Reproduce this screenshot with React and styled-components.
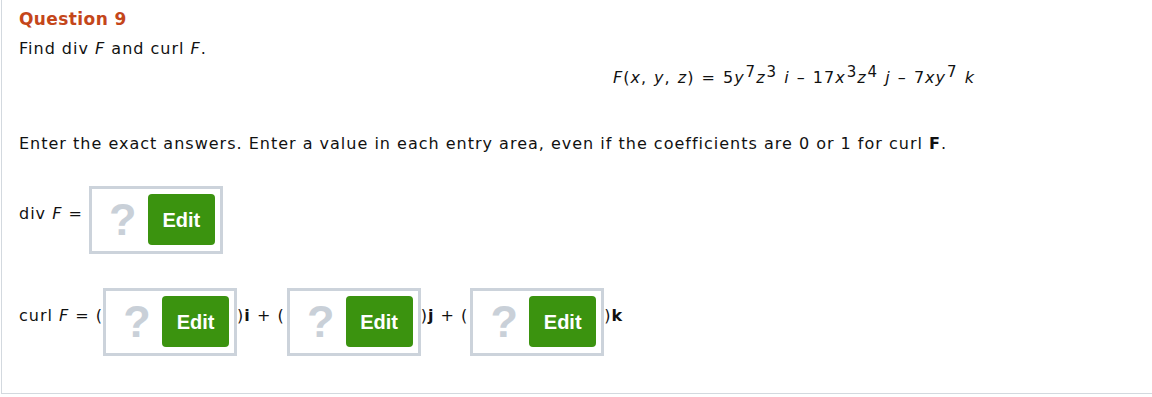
import styled, { createGlobalStyle } from 'styled-components';

const Global = createGlobalStyle`
  html, body { margin: 0; padding: 0; background: #fff; }
  body { font-family: "DejaVu Sans", Verdana, sans-serif; color: #111; }
`;

const Panel = styled.div`
  margin-left: 1px;
  height: 394px;
  border-left: 1px solid #d3d9df;
  border-bottom: 1px solid #d3d9df;
  padding: 8px 0 0 17px;
  box-sizing: border-box;
`;

const Heading = styled.div`
  font-size: 17px;
  line-height: 22px;
  font-weight: bold;
  letter-spacing: 0.4px;
  color: #c4461a;
`;

const Text = styled.div`
  font-size: 16px;
  line-height: 20px;
  letter-spacing: 1px;
  margin-top: ${({ $top }) => $top || 0}px;
`;

const Formula = styled.div`
  font-size: 16px;
  line-height: 20px;
  letter-spacing: 1px;
  word-spacing: 1px;
  margin-top: 9px;
  padding-left: 594px;
  white-space: nowrap;
  sup { font-size: 15px; line-height: 0; vertical-align: 6px; margin-left: 1px; }
`;

const Row = styled.div`
  display: flex;
  align-items: flex-start;
  margin-top: ${({ $top }) => $top}px;
  font-size: 16px;
  line-height: 20px;
  letter-spacing: 1px;
`;

const Label = styled.span`
  padding-top: 18px;
  margin-right: ${({ $gap }) => $gap || 0}px;
  white-space: pre;
`;

const Box = styled.div`
  width: 134px;
  height: 68px;
  box-sizing: border-box;
  border: 3px solid #ccd3db;
  display: flex;
  align-items: center;
  padding: 5px 5px 6px 0;
  letter-spacing: 0;
`;

const Mark = styled.span`
  flex: 1;
  text-align: center;
  font-family: "Liberation Sans", Arial, sans-serif;
  font-weight: bold;
  font-size: 45px;
  color: #c9d0d8;
  padding-left: 6px;
`;

const EditButton = styled.button`
  width: 67px;
  height: 100%;
  border: none;
  border-radius: 4px;
  background: #3b930f;
  color: #fff;
  font-family: "Liberation Sans", Arial, sans-serif;
  font-weight: bold;
  font-size: 20px;
  padding: 0;
  padding-top: 2px;
`;

const Answer = () => (
  <Box>
    <Mark>?</Mark>
    <EditButton>Edit</EditButton>
  </Box>
);

export default function App() {
  return (
    <>
      <Global />
      <Panel>
        <Heading>Question 9</Heading>
        <Text $top={9}>Find div <i>F</i> and curl <i>F</i>.</Text>
        <Formula>
          <i>F</i>(<i>x</i>, <i>y</i>, <i>z</i>) = 5<i>y</i><sup>7</sup><i>z</i><sup>3</sup> <i>i</i> – 17<i>x</i><sup>3</sup><i>z</i><sup>4</sup> <i>j</i> – 7<i>x</i><i>y</i><sup>7</sup> <i>k</i>
        </Formula>
        <Text $top={46}>Enter the exact answers. Enter a value in each entry area, even if the coefficients are 0 or 1 for curl <b>F</b>.</Text>
        <Row $top={32}>
          <Label $gap={6}>div <i>F</i> =</Label>
          <Answer />
        </Row>
        <Row $top={34}>
          <Label>curl <i>F</i> = (</Label>
          <Answer />
          <Label $gap={2}>)<b>i</b> + (</Label>
          <Answer />
          <Label $gap={2}>)<b>j</b> + (</Label>
          <Answer />
          <Label>)<b>k</b></Label>
        </Row>
      </Panel>
    </>
  );
}
